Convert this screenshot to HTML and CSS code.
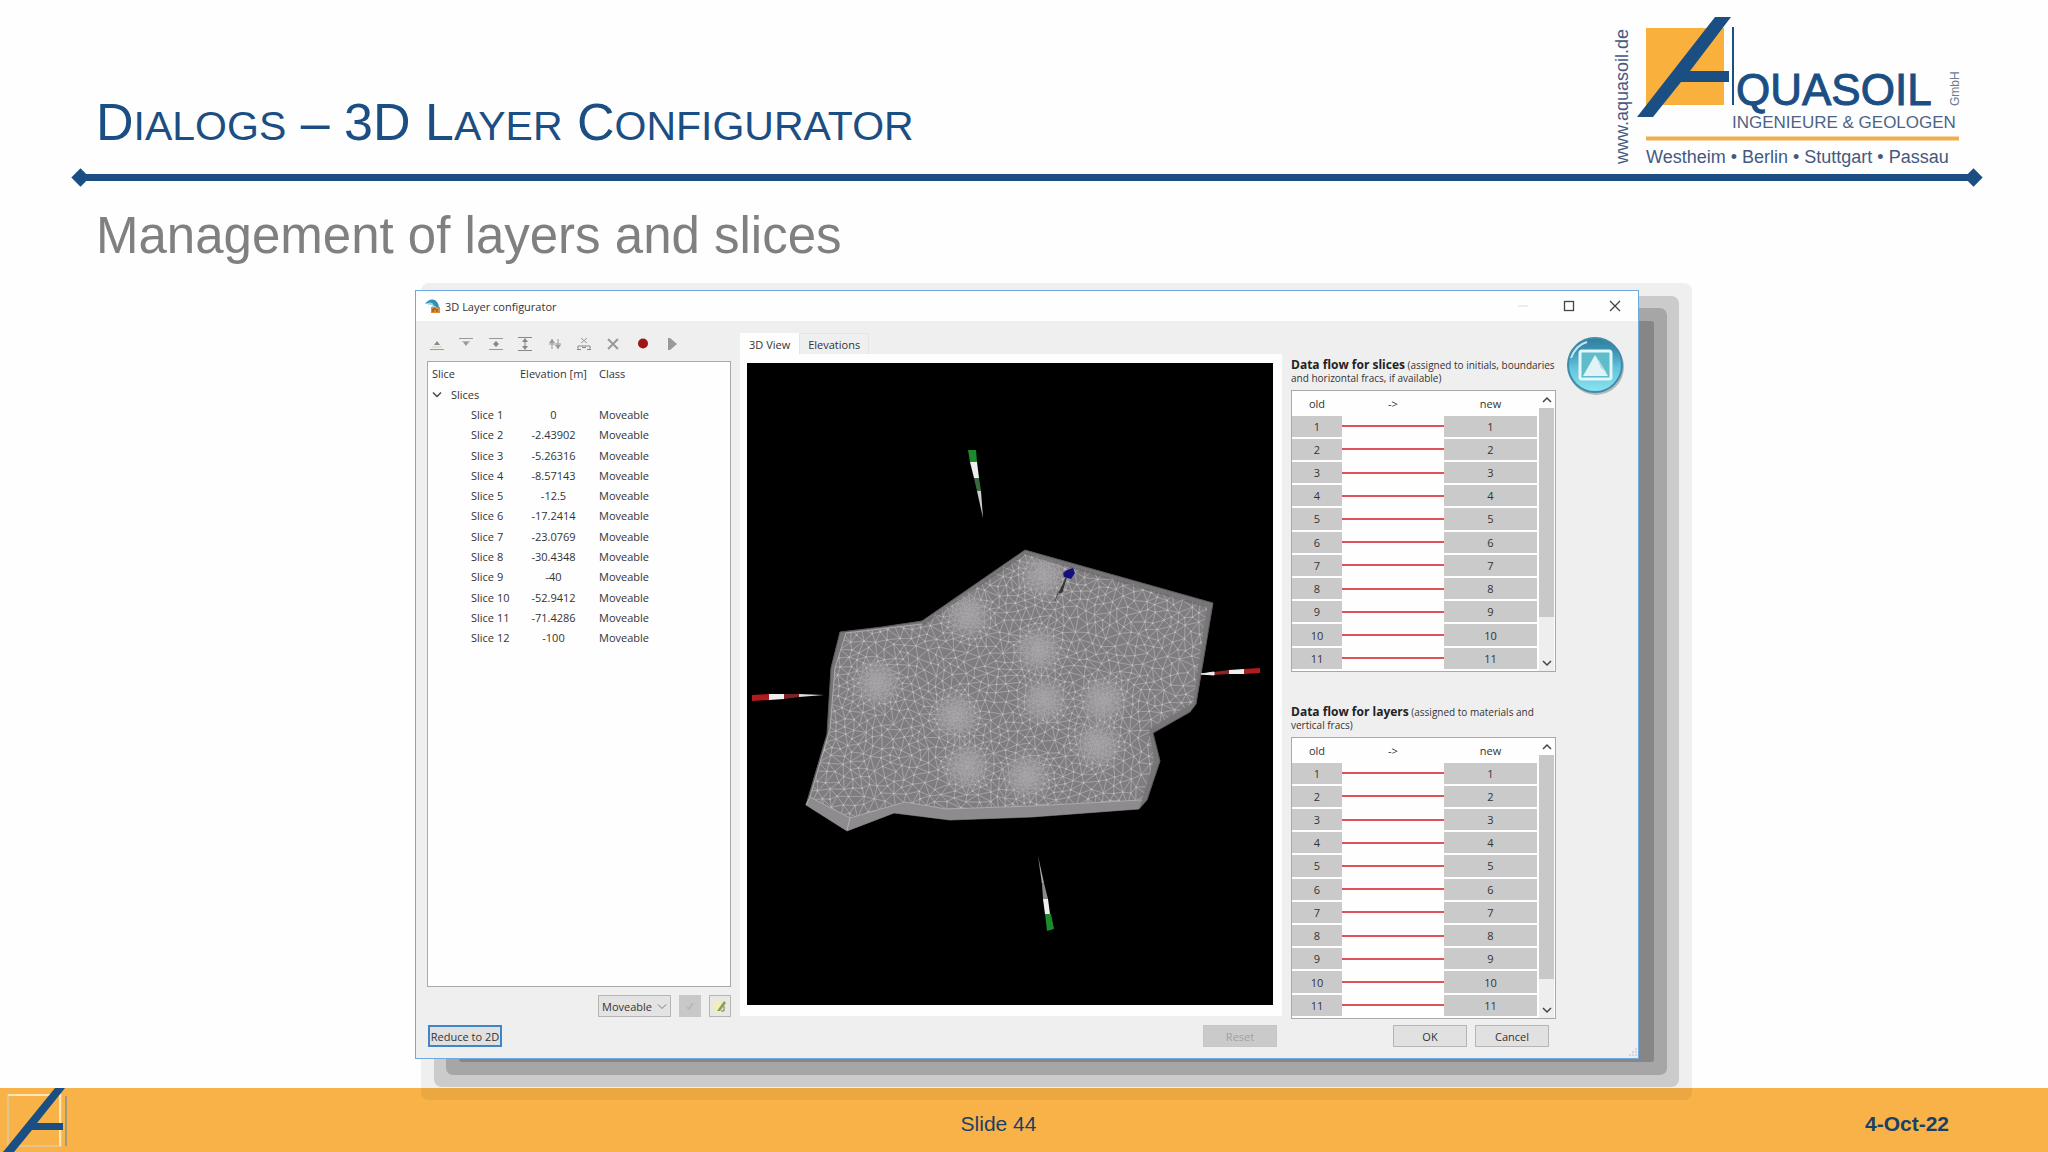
FILE: index.html
```html
<!DOCTYPE html>
<html lang="en">
<head>
<meta charset="utf-8">
<meta name="viewport" content="width=device-width, initial-scale=1">
<title>Dialogs – 3D Layer Configurator</title>
<link rel="stylesheet" href="styles.css">
</head>
<body>
<div class="slide">
  <header class="slide-header">
    <h1 class="slide-title">D<span class="small-cap">IALOGS</span> – 3D L<span class="small-cap">AYER</span> C<span class="small-cap">ONFIGURATOR</span></h1>
    <svg class="logo" width="360" height="170" viewBox="10 0 360 170" role="img" aria-label="Aquasoil">
      <rect x="46" y="28" width="78" height="77" fill="#f9b03d"/>
      <path d="M115 17H131L90 71H129V82H81L53 117H37Z" fill="#1b4f83"/>
      <path d="M133 27V105" stroke="#1b4f83" stroke-width="2"/>
      <text class="logo-name" x="136" y="105">QUASOIL</text>
      <text class="logo-sub" x="132" y="128">INGENIEURE &amp; GEOLOGEN</text>
      <path d="M46 138.500H359" stroke="#f0ae4c" stroke-width="4"/>
      <text class="logo-towns" x="46" y="163">Westheim • Berlin • Stuttgart • Passau</text>
      <text class="logo-side" transform="translate(28 164) rotate(-90)">www.aquasoil.de</text>
      <text class="logo-gmbh" transform="translate(359 106) rotate(-90)">GmbH</text>
    </svg>
  </header>
  <div class="rule"></div>

  <main class="stage">
    <h2 class="subtitle">Management of layers and slices</h2>

    <div class="dialog-shadow">
    <section class="dialog" aria-label="3D Layer configurator">
      <div class="titlebar">
        <svg width="16" height="16" viewBox="0 0 16 16" aria-hidden="true">
          <path d="M0 6Q4 0 10 2Q14 5 14 10L9 8Q5 4 0 6Z" fill="#2f8fb8"/>
          <path d="M3 6Q8 4 9 11" fill="none" stroke="#9fd3e6" stroke-width="2"/>
          <rect x="6" y="9" width="9" height="6" fill="#e08a35"/>
          <path d="M8 14V11H11M12 14V11" stroke="#7a4a20" fill="none"/>
        </svg>
        <span class="titlebar-text">3D Layer configurator</span>
        <div class="window-buttons">
          <button type="button" class="win-btn" aria-label="Minimize" disabled><svg width="12" height="12" viewBox="0 0 12 12"><path d="M1 6H11" stroke="#dcdcdc"/></svg></button>
          <button type="button" class="win-btn" aria-label="Maximize"><svg width="12" height="12" viewBox="0 0 12 12"><rect x="1.500" y="1.500" width="9" height="9" fill="none" stroke="#444" stroke-width="1.300"/></svg></button>
          <button type="button" class="win-btn" aria-label="Close"><svg width="12" height="12" viewBox="0 0 12 12"><path d="M1 1L11 11M11 1L1 11" stroke="#444" stroke-width="1.300"/></svg></button>
        </div>
      </div>

      <div class="panes">
        <div class="slices-pane">
          <div class="toolbar" role="toolbar" aria-label="Slice tools">
            <button type="button" class="tool" aria-label="Add above"><svg width="16" height="16" viewBox="0 0 16 16"><path d="M1 13.500H15" stroke="#999"/><path d="M8 5L11 9H5Z" fill="#888"/><path d="M3 11H13" stroke="#d8cda8"/></svg></button>
            <button type="button" class="tool" aria-label="Add below"><svg width="16" height="16" viewBox="0 0 16 16"><path d="M1 2.500H15" stroke="#999"/><path d="M4 5.500H12" stroke="#bbb"/><path d="M8 10L11 6H5Z" fill="#999"/></svg></button>
            <button type="button" class="tool" aria-label="Insert between"><svg width="16" height="16" viewBox="0 0 16 16"><path d="M1 2.500H15M1 13.500H15" stroke="#999"/><path d="M8 5L11 8L8 11L5 8Z" fill="#888"/></svg></button>
            <button type="button" class="tool" aria-label="Distribute"><svg width="16" height="16" viewBox="0 0 16 16"><path d="M1 1.500H15M1 14.500H15M8 3V13" stroke="#888"/><path d="M8 2L11 6H5ZM8 14L11 10H5Z" fill="#888"/></svg></button>
            <button type="button" class="tool" aria-label="Swap"><svg width="16" height="16" viewBox="0 0 16 16"><path d="M5 3V13M11 3V13M2 8H14" stroke="#999"/><path d="M5 3L8 7H2ZM11 13L14 9H8Z" fill="#999"/></svg></button>
            <button type="button" class="tool" aria-label="Split"><svg width="16" height="16" viewBox="0 0 16 16"><path d="M5 2L11 7M11 2L5 7" stroke="#999"/><path d="M2 14V10H14V14M1 13.500H5M11 13.500H15" fill="none" stroke="#888"/><path d="M6 11.500H10" stroke="#888"/></svg></button>
            <button type="button" class="tool" aria-label="Delete"><svg width="16" height="16" viewBox="0 0 16 16"><path d="M3 3L13 13M13 3L3 13" stroke="#999" stroke-width="2"/></svg></button>
            <button type="button" class="tool" aria-label="Record"><svg width="16" height="16" viewBox="0 0 16 16"><circle cx="8" cy="7.500" r="5" fill="#a01515"/></svg></button>
            <button type="button" class="tool" aria-label="Play"><svg width="16" height="16" viewBox="0 0 16 16"><path d="M4 2H6L13 8L6 14H4Z" fill="#999"/></svg></button>
          </div>

          <div class="tree-box">
            <table class="tree">
              <thead><tr><th class="col-slice">Slice</th><th class="col-elev">Elevation [m]</th><th>Class</th></tr></thead>
              <tbody>
                <tr><td class="group" colspan="3"><svg class="chevron" width="10" height="8" viewBox="0 0 10 8" aria-hidden="true"><path d="M1 1.500L5 5.500L9 1.500" fill="none" stroke="#444" stroke-width="1.400"/></svg>Slices</td></tr>
                <tr><td class="item">Slice 1</td><td class="num">0</td><td>Moveable</td></tr>
                <tr><td class="item">Slice 2</td><td class="num">-2.43902</td><td>Moveable</td></tr>
                <tr><td class="item">Slice 3</td><td class="num">-5.26316</td><td>Moveable</td></tr>
                <tr><td class="item">Slice 4</td><td class="num">-8.57143</td><td>Moveable</td></tr>
                <tr><td class="item">Slice 5</td><td class="num">-12.5</td><td>Moveable</td></tr>
                <tr><td class="item">Slice 6</td><td class="num">-17.2414</td><td>Moveable</td></tr>
                <tr><td class="item">Slice 7</td><td class="num">-23.0769</td><td>Moveable</td></tr>
                <tr><td class="item">Slice 8</td><td class="num">-30.4348</td><td>Moveable</td></tr>
                <tr><td class="item">Slice 9</td><td class="num">-40</td><td>Moveable</td></tr>
                <tr><td class="item">Slice 10</td><td class="num">-52.9412</td><td>Moveable</td></tr>
                <tr><td class="item">Slice 11</td><td class="num">-71.4286</td><td>Moveable</td></tr>
                <tr><td class="item">Slice 12</td><td class="num">-100</td><td>Moveable</td></tr>
              </tbody>
            </table>
          </div>

          <div class="class-editor">
            <span class="select-wrap">
              <select class="class-select" aria-label="Class"><option>Moveable</option><option>Fixed</option></select>
              <svg class="select-arrow" width="10" height="8" viewBox="0 0 10 8" aria-hidden="true"><path d="M1 1.500L5 5.500L9 1.500" fill="none" stroke="#777"/></svg>
            </span>
            <button type="button" class="icon-btn icon-btn-off" aria-label="Apply" disabled><svg width="16" height="16" viewBox="0 0 16 16"><path d="M5 9L7 11L11 5" fill="none" stroke="#b8b8b8" stroke-width="2"/></svg></button>
            <button type="button" class="icon-btn" aria-label="Edit"><svg width="16" height="16" viewBox="0 0 16 16"><rect x="2" y="4" width="9" height="10" fill="#eef0b8"/><path d="M5 13L12 3L14 5L8 13Z" fill="#8d9c58"/><path d="M12 8V13H9" stroke="#777" fill="none"/></svg></button>
          </div>
        </div>

        <div class="view-pane">
          <div class="tabs" role="tablist">
            <button type="button" class="tab tab-active" role="tab" aria-selected="true">3D View</button>
            <button type="button" class="tab" role="tab" aria-selected="false">Elevations</button>
          </div>
          <div class="view-frame">
            <svg class="view" viewBox="0 0 526 642" role="img" aria-label="3D mesh">
              <defs>
                <clipPath id="top-face"><path d="M99 270L175 261L278 190L460 243L446 340L402 366L407 397L395 437L285 443L199 446L158 439L103 455L63 434L83 366L88 305Z"/></clipPath>
                <radialGradient id="dense"><stop offset="0" stop-color="#adabad" stop-opacity=".7"/><stop offset=".5" stop-color="#a8a6a8" stop-opacity=".4"/><stop offset="1" stop-color="#a8a6a8" stop-opacity="0"/></radialGradient>
              </defs>
              <rect width="526" height="642" fill="#000"/>
              <path d="M93 269L135 264L175 258L278 187L466 240L449 341L443 349L406 370L413 398L400 437L392 446L285 454L203 457L147 450L100 468L59 442L80 371L84 305Z" fill="#777577" stroke="#5c5a5c"/>
              <path d="M59 442L63 434L103 455L158 439L199 446L285 443L395 437L392 446L285 454L203 457L147 450L100 468Z" fill="#8d8b8d"/>
              <g clip-path="url(#top-face)">
                <rect width="526" height="642" fill="#7f7d7f"/>
                <path id="mesh" fill="none" stroke="#a3a1a3" stroke-width=".7"/>
                <path id="nodes" fill="none" stroke="#c2c0c2" stroke-width="1.900" stroke-linecap="round"/>
                <g id="hotspots" fill="url(#dense)"></g>
                <path d="M175 260L278 189L460 242" fill="none" stroke="#5e5c5e" stroke-width="5" stroke-opacity=".5"/>
              </g>
              <path d="M175 261L99 270L88 305L83 366L63 434L103 455L158 439L199 446L285 443L395 437" fill="none" stroke="#acaaac"/>
              <path d="M100 467L103 455M59 442L63 434" stroke="#b4b2b4"/>
              <g>
                <path d="M221 87H229L230 99H223Z" fill="#1c8a2c"/><path d="M223 99H230L232 115H227Z" fill="#eee"/><path d="M227 115H232L234 128H230Z" fill="#3c6a40"/><path d="M230 128H234L236 155Z" fill="#ccc"/>
                <path d="M291 493L297 520L295 521Z" fill="#aaa"/><path d="M295 521L297 520L301 536H296Z" fill="#888"/><path d="M296 536H301L303 551H298Z" fill="#eee"/><path d="M298 551H304L307 566L300 568Z" fill="#1c8a2c"/>
                <path d="M5 332L22 331V337L5 338Z" fill="#b01c1c"/><path d="M22 331L37 331V336L22 337Z" fill="#eee"/><path d="M37 331L52 331V334L37 336Z" fill="#7a2525"/><path d="M52 331L77 332L52 334Z" fill="#ddd"/>
                <path d="M513 305L497 306V311L513 310Z" fill="#b01c1c"/><path d="M497 306L482 307V311L497 311Z" fill="#eee"/><path d="M482 307L467 309V312L482 311Z" fill="#8a2525"/><path d="M467 309L454 311L467 312Z" fill="#eee" stroke="#eee"/>
                <path d="M320 207L326 205L328 210L324 216L317 214L316 210Z" fill="#16107c"/><path d="M319 215L312 230L315 229Z" fill="#333" stroke="#333"/><path d="M312 228L308 238" stroke="#555"/>
              </g>
            </svg>
          </div>
        </div>

        <div class="flow-pane">
          <section class="flow">
            <p class="flow-title"><b>Data flow for slices</b> (assigned to initials, boundaries<br>and horizontal fracs, if available)</p>
            <div class="flow-box">
              <table class="flow-table">
                <thead><tr><th class="col-old">old</th><th>-&gt;</th><th class="col-new">new</th></tr></thead>
                <tbody>
                  <tr><td>1</td><td class="link"></td><td>1</td></tr>
                  <tr><td>2</td><td class="link"></td><td>2</td></tr>
                  <tr><td>3</td><td class="link"></td><td>3</td></tr>
                  <tr><td>4</td><td class="link"></td><td>4</td></tr>
                  <tr><td>5</td><td class="link"></td><td>5</td></tr>
                  <tr><td>6</td><td class="link"></td><td>6</td></tr>
                  <tr><td>7</td><td class="link"></td><td>7</td></tr>
                  <tr><td>8</td><td class="link"></td><td>8</td></tr>
                  <tr><td>9</td><td class="link"></td><td>9</td></tr>
                  <tr><td>10</td><td class="link"></td><td>10</td></tr>
                  <tr><td>11</td><td class="link"></td><td>11</td></tr>
                </tbody>
              </table>
              <div class="scrollbar">
                <button type="button" class="scroll-btn" aria-label="Scroll up"><svg width="10" height="8" viewBox="0 0 10 8"><path d="M1 6L5 2L9 6" fill="none" stroke="#444" stroke-width="1.500"/></svg></button>
                <div class="scroll-track"><div class="scroll-thumb" style="height:85%"></div></div>
                <button type="button" class="scroll-btn" aria-label="Scroll down"><svg width="10" height="8" viewBox="0 0 10 8"><path d="M1 2L5 6L9 2" fill="none" stroke="#444" stroke-width="1.500"/></svg></button>
              </div>
            </div>
          </section>

          <section class="flow">
            <p class="flow-title"><b>Data flow for layers</b> (assigned to materials and<br>vertical fracs)</p>
            <div class="flow-box">
              <table class="flow-table">
                <thead><tr><th class="col-old">old</th><th>-&gt;</th><th class="col-new">new</th></tr></thead>
                <tbody>
                  <tr><td>1</td><td class="link"></td><td>1</td></tr>
                  <tr><td>2</td><td class="link"></td><td>2</td></tr>
                  <tr><td>3</td><td class="link"></td><td>3</td></tr>
                  <tr><td>4</td><td class="link"></td><td>4</td></tr>
                  <tr><td>5</td><td class="link"></td><td>5</td></tr>
                  <tr><td>6</td><td class="link"></td><td>6</td></tr>
                  <tr><td>7</td><td class="link"></td><td>7</td></tr>
                  <tr><td>8</td><td class="link"></td><td>8</td></tr>
                  <tr><td>9</td><td class="link"></td><td>9</td></tr>
                  <tr><td>10</td><td class="link"></td><td>10</td></tr>
                  <tr><td>11</td><td class="link"></td><td>11</td></tr>
                </tbody>
              </table>
              <div class="scrollbar">
                <button type="button" class="scroll-btn" aria-label="Scroll up"><svg width="10" height="8" viewBox="0 0 10 8"><path d="M1 6L5 2L9 6" fill="none" stroke="#444" stroke-width="1.500"/></svg></button>
                <div class="scroll-track"><div class="scroll-thumb" style="height:91%"></div></div>
                <button type="button" class="scroll-btn" aria-label="Scroll down"><svg width="10" height="8" viewBox="0 0 10 8"><path d="M1 2L5 6L9 2" fill="none" stroke="#444" stroke-width="1.500"/></svg></button>
              </div>
            </div>
          </section>
        </div>

        <svg class="badge" width="60" height="60" viewBox="0 0 60 60" aria-hidden="true">
          <defs>
            <linearGradient id="orb" x1="0" y1="0" x2="0" y2="1"><stop offset="0" stop-color="#2f7fa0"/><stop offset=".25" stop-color="#3f94b4"/><stop offset=".55" stop-color="#62c3dc"/><stop offset="1" stop-color="#8be4f0"/></linearGradient>
          </defs>
          <circle cx="31" cy="31" r="28" fill="#b4b8ba"/>
          <circle cx="30" cy="29" r="27" fill="url(#orb)" stroke="#3d8ba8" stroke-width="2"/>
          <path d="M6 22Q11 9 22 6" fill="none" stroke="#c4e6f0" stroke-width="2"/>
          <rect x="15" y="15" width="31" height="28" rx="2" fill="#5fbdc9" stroke="#e4f6fa" stroke-width="3"/>
          <path d="M30 19L43 40H18Z" fill="#e0f4f8"/>
          <path d="M31 20L42 37L36 32Z" fill="#b5d8e0"/>
        </svg>
      </div>

      <div class="actions">
        <button type="button" class="btn btn-focus">Reduce to 2D</button>
        <button type="button" class="btn btn-reset" disabled>Reset</button>
        <button type="button" class="btn btn-ok">OK</button>
        <button type="button" class="btn">Cancel</button>
      </div>
      <svg class="grip" width="10" height="10" viewBox="0 0 10 10" aria-hidden="true"><path d="M9 1V3M9 4V6M6 4V6M9 7V9M6 7V9M3 7V9" stroke="#d4d6e2" stroke-width="2"/></svg>
    </section>
    </div>
  </main>

  <footer class="slide-footer">
    <svg width="70" height="64" viewBox="0 0 70 64" aria-hidden="true">
      <rect x="8" y="7" width="53" height="51" fill="none" stroke="#e3c58c" stroke-width="2"/>
      <path d="M8 7H60V58" fill="none" stroke="#fbe7b8" stroke-width="2"/>
      <path d="M66 8V58" stroke="#a39a78" stroke-width="2"/>
      <path d="M55 0H65L37 35H63V42H32L14 64H3Z" fill="#1b4f83"/>
    </svg>
    <span class="slide-number">Slide 44</span>
    <time class="slide-date" datetime="2022-10-04">4-Oct-22</time>
  </footer>
</div>
<script src="mesh.js"></script>
</body>
</html>
```
FILE: styles.css
```css
* {
  box-sizing: border-box;
}

body {
  margin: 0;
  background: #fefefe;
  font-family: "Liberation Sans", Arial, sans-serif;
}

.slide {
  display: flex;
  flex-direction: column;
  min-height: 100vh;
}

/* Slide header */

.slide-header {
  display: flex;
  justify-content: space-between;
  align-items: flex-start;
  height: 174px;
  padding: 0 78px 0 96px;
}

.slide-title {
  margin: 92px 0 0;
  color: #1b4f83;
  font-size: 52px;
  font-weight: 400;
  line-height: 60px;
}

.small-cap {
  font-size: 41px;
}

.logo {
  flex: none;
}

.logo text {
  fill: #1b4f83;
}

.logo .logo-name {
  font-size: 44px;
  stroke: #1b4f83;
  stroke-width: 1px;
}

.logo .logo-sub {
  font-size: 17px;
  fill: #4d6384;
}

.logo .logo-towns {
  font-size: 18px;
  fill: #44597f;
}

.logo .logo-side {
  font-size: 18px;
  fill: #44597f;
}

.logo .logo-gmbh {
  font-size: 12px;
  fill: #6d7a92;
}

.rule {
  position: relative;
  height: 7px;
  margin: 0 75px 0 81px;
  background: #1b4f83;
}

.rule::before,
.rule::after {
  content: "";
  position: absolute;
  top: -3px;
  width: 13px;
  height: 13px;
  background: #1b4f83;
  transform: rotate(45deg);
}

.rule::before {
  left: -7px;
}

.rule::after {
  right: -7px;
}

/* Slide body */

.stage {
  flex: 1;
  padding: 25px 1px 29px 7px;
}

.subtitle {
  margin: 0 0 24px;
  padding-left: 89px;
  color: #808080;
  font-size: 51px;
  font-weight: 400;
  line-height: 60px;
}

/* Dialog window, with a stepped drop shadow behind it */

.dialog-shadow {
  position: relative;
  z-index: 1;
  width: 60%;
  min-width: 1100px;
  margin: 0 auto -29px;
}

.dialog-shadow::before {
  content: "";
  position: absolute;
  inset: 31px -15px -3px 44px;
  z-index: -1;
  border-radius: 2px;
  background: rgba(0, 0, 0, .47);
  box-shadow:
    0 0 0 13px rgba(0, 0, 0, .18),
    0 0 0 25px rgba(0, 0, 0, .15),
    0 0 0 38px rgba(0, 0, 0, .06);
}

.dialog {
  position: relative;
  border: 1px solid #6fa9e2;
  background: #f0efef;
  color: #333;
  font-family: "Open Sans", "Noto Sans", sans-serif;
  font-size: 11px;
  line-height: 13px;
}

.dialog button,
.dialog select {
  font: inherit;
  color: inherit;
}

.titlebar {
  display: flex;
  align-items: center;
  gap: 4px;
  height: 30px;
  padding: 0 11px 0 9px;
  background: #fefefe;
}

.window-buttons {
  display: flex;
  gap: 22px;
  margin-left: auto;
}

.win-btn,
.tool,
.scroll-btn {
  display: grid;
  place-items: center;
  padding: 0;
  border: 0;
  background: none;
}

.win-btn {
  width: 24px;
  height: 24px;
}

.panes {
  display: grid;
  grid-template-columns: 304px 1fr 265px 60px;
  gap: 9px;
  padding: 0 13px 0 11px;
}

/* Slice list */

.slices-pane {
  display: flex;
  flex-direction: column;
}

.toolbar {
  display: flex;
  justify-content: space-between;
  width: 255px;
  padding: 15px 0 9px;
}

.tool {
  width: 20px;
  height: 16px;
}

.tree-box {
  flex: 1;
  border: 1px solid #a9a9a9;
  background: #fefefe;
}

.tree {
  width: 100%;
  height: 286px;
  border-collapse: collapse;
  table-layout: fixed;
  white-space: nowrap;
}

.tree th,
.tree td {
  padding: 0;
  font-weight: 400;
  text-align: left;
}

.tree thead tr {
  height: 22px;
}

.tree .col-slice {
  width: 80px;
  padding-left: 4px;
}

.tree .col-elev {
  width: 91px;
}

.tree .col-elev,
.tree .num {
  text-align: center;
}

.tree .item {
  padding-left: 43px;
}

.tree .group {
  padding-left: 4px;
}

.chevron {
  margin-right: 9px;
}

.class-editor {
  display: flex;
  justify-content: flex-end;
  gap: 8px;
  padding: 8px 0 2px;
}

.select-wrap {
  position: relative;
  display: flex;
}

.class-select {
  width: 73px;
  height: 22px;
  padding: 0 3px;
  border: 1px solid #b5b5b5;
  background: #e4e3e3;
  appearance: none;
}

.select-arrow {
  position: absolute;
  top: 8px;
  right: 4px;
  pointer-events: none;
}

.icon-btn {
  display: grid;
  place-items: center;
  width: 22px;
  height: 22px;
  padding: 0;
  border: 1px solid #b5b5b5;
  background: #e9e9e4;
}

.icon-btn-off {
  border-color: #c8c8c8;
  background: #c8c8c8;
}

/* 3D view */

.view-pane {
  padding-top: 12px;
}

.tabs {
  display: flex;
}

.tab {
  height: 21px;
  padding: 0 8px;
  border: 1px solid #e6e5e5;
  border-bottom: 0;
  background: #f0efef;
}

.tab-active {
  border-color: #fefefe;
  background: #fefefe;
}

.view-frame {
  padding: 9px 9px 11px 7px;
  background: #fefefe;
}

.view {
  display: block;
  width: 100%;
}

/* Data flow tables */

.flow-pane {
  display: flex;
  flex-direction: column;
  gap: 33px;
  padding-top: 37px;
}

.flow-title {
  margin: 0 0 5px;
  font-size: 10px;
  white-space: nowrap;
}

.flow-title b {
  color: #222;
  font-size: 12px;
}

.flow-box {
  display: flex;
  border: 1px solid #a9a9a9;
  background: #fefefe;
}

.flow-table {
  flex: 1;
  height: 280px;
  border-collapse: collapse;
  table-layout: fixed;
}

.flow-table thead tr {
  height: 25px;
}

.flow-table th,
.flow-table td {
  padding: 0;
  font-weight: 400;
  text-align: center;
}

.flow-table .col-old {
  width: 50px;
}

.flow-table .col-new {
  width: 93px;
}

.flow-table td {
  border-bottom: 2px solid #fefefe;
  background: #cbcacb;
}

.flow-table .link {
  background: linear-gradient(#e0525a, #e0525a) center / 100% 2px no-repeat;
}

.scrollbar {
  display: flex;
  flex-direction: column;
  width: 18px;
  padding: 0 1px 0 2px;
}

.scroll-btn {
  height: 17px;
}

.scroll-track {
  flex: 1;
  background: #efeeef;
}

.scroll-btn:last-child {
  background: #efeeef;
}

.scroll-thumb {
  background: #c9c8c9;
}

.badge {
  margin-top: 15px;
}

/* Bottom buttons */

.actions {
  display: flex;
  gap: 8px;
  padding: 6px 89px 11px 12px;
}

.btn {
  width: 74px;
  height: 22px;
  padding: 0;
  border: 1px solid #b5b5b5;
  background: #e2e1e2;
  white-space: nowrap;
}

.btn-focus {
  border: 2px solid #3f86c8;
}

.dialog .btn-reset {
  margin-left: auto;
  border-color: #c6c6c6;
  background: #cbcacb;
  color: #a2a2a2;
}

.btn-ok {
  margin-left: 108px;
}

.grip {
  position: absolute;
  right: 1px;
  bottom: 1px;
}

/* Slide footer */

.slide-footer {
  display: grid;
  grid-template-columns: 1fr auto 1fr;
  align-items: center;
  height: 64px;
  padding-right: 99px;
  background: #f9b247;
  color: #1b3f66;
  font-size: 21px;
}

.slide-number {
  padding: 8px 0 0 48px;
}

.slide-date {
  justify-self: end;
  padding-top: 8px;
  font-weight: 700;
}
```
FILE: mesh.js
```js
// Builds the triangulated surface: graded point sampling, then a Delaunay triangulation.
(function () {
  var hotspots = [[296, 212], [221, 252], [291, 287], [130, 320], [297, 338],
    [356, 338], [209, 353], [351, 382], [220, 404], [280, 413]];
  var seed = 7;
  function random() {
    seed = (seed * 16807) % 2147483647;
    return seed / 2147483647;
  }

  function spacing(x, y) {
    var nearest = Infinity;
    hotspots.forEach(function (h) {
      nearest = Math.min(nearest, Math.hypot(x - h[0], y - h[1]));
    });
    return Math.max(3, Math.min(7.5, 3 + (nearest - 10) * 0.18));
  }

  var points = [];
  for (var i = 0; i < 40000; i++) {
    var x = 50 + random() * 420;
    var y = 180 + random() * 285;
    var gap = spacing(x, y);
    var free = true;
    for (var j = 0; j < points.length; j++) {
      var px = points[j][0] - x, py = points[j][1] - y;
      if (px * px + py * py < gap * gap) { free = false; break; }
    }
    if (free) points.push([x, y]);
  }
  points.sort(function (a, b) { return a[0] - b[0]; });

  var n = points.length;

  // Nodes show as dots only where the mesh is coarse.
  document.getElementById("nodes").setAttribute("d", points.filter(function (p) {
    return spacing(p[0], p[1]) > 4.5;
  }).map(function (p) {
    return "M" + p[0].toFixed(1) + " " + p[1].toFixed(1) + "h0";
  }).join(""));

  points.push([-3000, -3000], [4000, -3000], [250, 6000]);

  function circle(a, b, c) {
    var A = points[a], B = points[b], C = points[c];
    var bx = B[0] - A[0], by = B[1] - A[1], cx = C[0] - A[0], cy = C[1] - A[1];
    var d = 2 * (bx * cy - by * cx);
    var b2 = bx * bx + by * by, c2 = cx * cx + cy * cy;
    var ux = (cy * b2 - by * c2) / d, uy = (bx * c2 - cx * b2) / d;
    return { v: [a, b, c], x: A[0] + ux, y: A[1] + uy, r: ux * ux + uy * uy };
  }

  var open = [circle(n, n + 1, n + 2)], done = [];
  for (var k = 0; k < n; k++) {
    var p = points[k], edges = new Map(), keep = [];
    open.forEach(function (t) {
      var dx = p[0] - t.x, dy = p[1] - t.y;
      if (dx > 0 && dx * dx > t.r) { done.push(t); return; }
      if (dx * dx + dy * dy > t.r) { keep.push(t); return; }
      [[0, 1], [1, 2], [2, 0]].forEach(function (e) {
        var a = Math.min(t.v[e[0]], t.v[e[1]]), b = Math.max(t.v[e[0]], t.v[e[1]]);
        var key = a + "," + b;
        if (edges.has(key)) edges.set(key, null); else edges.set(key, [a, b]);
      });
    });
    edges.forEach(function (e) { if (e) keep.push(circle(e[0], e[1], k)); });
    open = keep;
  }

  var path = "";
  done.concat(open).forEach(function (t) {
    if (Math.max.apply(null, t.v) >= n) return;
    path += "M" + t.v.map(function (v) {
      return points[v][0].toFixed(1) + " " + points[v][1].toFixed(1);
    }).join("L") + "Z";
  });
  document.getElementById("mesh").setAttribute("d", path);

  var group = document.getElementById("hotspots");
  hotspots.forEach(function (h) {
    var c = document.createElementNS("http://www.w3.org/2000/svg", "circle");
    c.setAttribute("cx", h[0]);
    c.setAttribute("cy", h[1]);
    c.setAttribute("r", 28);
    group.appendChild(c);
  });
})();
```
